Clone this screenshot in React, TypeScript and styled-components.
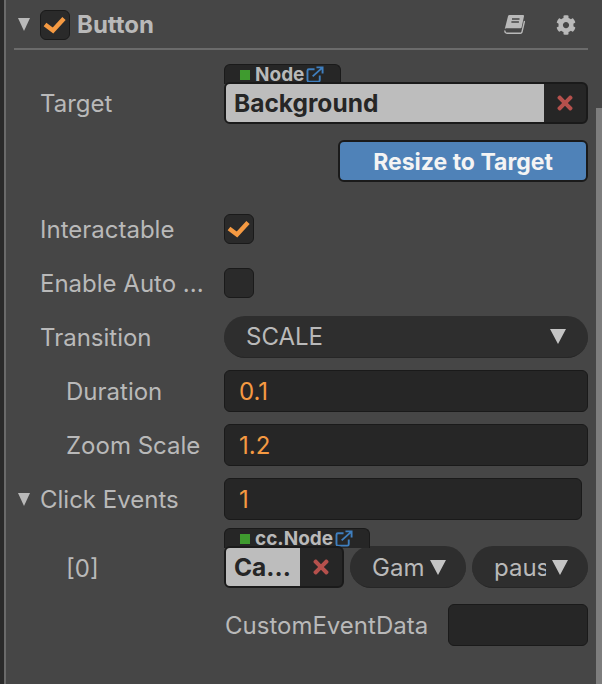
import * as React from 'react';
import styled, { createGlobalStyle } from 'styled-components';
import { FaCog, FaTimes } from 'react-icons/fa';

const GlobalStyle = createGlobalStyle`
  html, body {
    margin: 0;
    padding: 0;
    background: #464646;
  }
  body {
    font-family: Inter, "Liberation Sans", sans-serif;
    color: #b9b9b9;
    -webkit-font-smoothing: antialiased;
  }
`;

const Panel = styled.div`
  position: relative;
  box-sizing: border-box;
  width: 602px;
  height: 684px;
  overflow: hidden;
  background: #464646;
  border-left: 4px solid #2a2a2a;
  padding: 0 14px 0 10px;
`;

const Edge = styled.div`
  position: absolute;
  left: 0;
  top: 0;
  bottom: 0;
  width: 2px;
  background: #6a6a6a;
`;

const Scrollbar = styled.div`
  position: absolute;
  right: 0;
  top: 108px;
  bottom: 0;
  width: 6px;
  background: #7d7d7d;
`;

const Header = styled.div`
  box-sizing: border-box;
  display: flex;
  align-items: center;
  height: 50px;
  padding-top: 1px;
  border-bottom: 2px solid #6b6b6b;
`;

const Arrow = styled.span`
  display: block;
  width: 0;
  height: 0;
  margin: 0 10px 0 4px;
  border-left: 6px solid transparent;
  border-right: 6px solid transparent;
  border-top: 13px solid #b9b9b9;
  flex: none;
`;

const Check = styled.div`
  box-sizing: border-box;
  display: flex;
  align-items: center;
  justify-content: center;
  width: 30px;
  height: 30px;
  background: #2a2a2a;
  border: 1px solid #1a1a1a;
  border-radius: 6px;
  flex: none;
`;

const CheckMark = styled.svg`
  display: block;
  width: 28px;
  height: 28px;
`;

const HeaderTitle = styled.span`
  margin-left: 7px;
  font-size: 24px;
  font-weight: 700;
  color: #b9b9b9;
  flex: 1;
`;

const HeaderIcons = styled.div`
  display: flex;
  align-items: center;
  gap: 31px;
  padding-right: 12px;
  font-size: 20px;
  color: #b9b9b9;
`;

const BookIcon = styled.svg`
  display: block;
  width: 21px;
  height: 21px;
`;

const Row = styled.div`
  display: flex;
  align-items: center;
  height: 54px;
`;

const Label = styled.div<{ $indent?: number }>`
  box-sizing: border-box;
  flex: none;
  width: 210px;
  padding-left: ${p => p.$indent ?? 26}px;
  font-size: 24px;
  white-space: nowrap;
`;

const FoldLabel = styled.div`
  display: flex;
  align-items: center;
  flex: none;
  width: 210px;
  font-size: 24px;
`;

const Value = styled.div`
  flex: 1;
  min-width: 0;
  display: flex;
  gap: 6px;
`;

const Input = styled.div<{ $width?: number }>`
  box-sizing: border-box;
  width: ${p => (p.$width ? `${p.$width}px` : '100%')};
  height: 42px;
  padding: 0 14px;
  line-height: 42px;
  background: #262626;
  border: 1px solid #1a1a1a;
  border-radius: 6px;
  color: #f59a42;
  font-size: 24px;
`;

const Select = styled.div<{ $wide?: boolean }>`
  box-sizing: border-box;
  display: flex;
  align-items: center;
  width: ${p => (p.$wide ? '100%' : '116px')};
  height: 42px;
  padding: ${p => (p.$wide ? '0 22px 0 22px' : '2px 20px 0 22px')};
  background: #2e2e2e;
  border-bottom: 1px solid #262626;
  border-radius: 21px;
  font-size: 24px;
  color: #b9b9b9;
  flex: none;
`;

const SelectText = styled.span`
  flex: 1;
  min-width: 0;
  overflow: hidden;
  white-space: nowrap;
`;

const SelectCaret = styled.span`
  flex: none;
  width: 0;
  height: 0;
  margin-left: 6px;
  border-left: 8px solid transparent;
  border-right: 8px solid transparent;
  border-top: 15px solid #c4c4c4;
`;

const PickerWrap = styled.div<{ $width: number }>`
  position: relative;
  flex: none;
  width: ${p => p.$width}px;
  height: 42px;
`;

const PickerTab = styled.div<{ $width: number }>`
  position: absolute;
  left: 0;
  bottom: 40px;
  box-sizing: border-box;
  display: flex;
  align-items: center;
  width: ${p => p.$width}px;
  height: 20px;
  padding: 0 0 0 15px;
  background: #262626;
  border: 1px solid #1a1a1a;
  border-bottom: 0;
  border-radius: 6px 6px 0 0;
  font-size: 19px;
  font-weight: 700;
  color: #b9b9b9;
`;

const GreenDot = styled.span`
  flex: none;
  width: 10px;
  height: 10px;
  margin-right: 5px;
  background: #3f9b2f;
`;

const LinkIcon = styled.svg`
  flex: none;
  width: 19px;
  height: 17px;
  margin-left: 2px;
`;

const PickerField = styled.div`
  position: relative;
  box-sizing: border-box;
  display: flex;
  width: 100%;
  height: 100%;
  overflow: hidden;
  background: #262626;
  border: 2px solid #1a1a1a;
  border-radius: 6px;
`;

const PickerName = styled.div`
  flex: 1;
  min-width: 0;
  padding-left: 8px;
  line-height: 39px;
  background: #bdbdbd;
  color: #262626;
  font-size: 24.5px;
  font-weight: 700;
  white-space: nowrap;
  overflow: hidden;
`;

const PickerClear = styled.div`
  flex: none;
  display: flex;
  align-items: center;
  justify-content: center;
  width: 42px;
  color: #b5504c;
  font-size: 22px;
`;

const ActionRow = styled.div`
  display: flex;
  justify-content: flex-end;
  margin-top: 16px;
  margin-bottom: 20px;
`;

const ActionButton = styled.div`
  box-sizing: border-box;
  width: 250px;
  height: 42px;
  line-height: 40px;
  text-align: center;
  background: #4f82b8;
  border: 2px solid #1a1a1a;
  border-radius: 6px;
  color: #f4f4f4;
  font-size: 23px;
  font-weight: 700;
`;

const TargetRow = styled(Row)`
  align-items: flex-end;
  height: 74px;
`;

const TargetLabel = styled(Label)`
  line-height: 40px;
`;

const ShortInput = styled(Value)`
  padding-right: 6px;
`;

const EventRow = styled(Row)`
  height: 72px;
  padding-top: 10px;
  box-sizing: border-box;
`;

const EventLabel = styled(Label)`
  padding-top: 2px;
`;

const DataRow = styled.div`
  display: flex;
  align-items: center;
  justify-content: space-between;
  height: 54px;
  padding-left: 211px;
  font-size: 24px;
  white-space: nowrap;
`;

const Tick = () => (
  <CheckMark viewBox="0 0 28 28" fill="none" stroke="#f59a42" strokeWidth="4.500">
    <path d="M4 13.500 12 19.500 23 7.500" />
  </CheckMark>
);

const Book = () => (
  <BookIcon viewBox="0 0 21 21">
    <path
      d="M5.500 1H19a1 1 0 0 1 1 1.200L17.600 13.500a1 1 0 0 1-1 .8H3c-1 0-2 .4-2.300 1L4 2.200A1.600 1.600 0 0 1 5.500 1Z"
      fill="#b9b9b9"
    />
    <path
      d="M1 16.500c-.3 1.500.5 2.800 2 2.800h13.500c.7 0 1.200-.4 1.400-1L20.500 7"
      fill="none"
      stroke="#b9b9b9"
      strokeWidth="1.400"
    />
    <path d="M8 5h7.500M7.400 8h7.500" stroke="#464646" strokeWidth="1.400" />
  </BookIcon>
);

const External = () => (
  <LinkIcon viewBox="0 0 20 18" fill="none" stroke="#3f7fbf" strokeWidth="2">
    <path d="M9 3.500H3a1.500 1.500 0 0 0-1.500 1.500v10A1.500 1.500 0 0 0 3 16.500h10a1.500 1.500 0 0 0 1.500-1.500v-5" />
    <path d="M7 11 17 2M11 1.500h6.500V8" />
  </LinkIcon>
);

const Picker = ({ width, tab, tabWidth, name }: { width: number; tab: string; tabWidth: number; name: string }) => (
  <PickerWrap $width={width}>
    <PickerTab $width={tabWidth}>
      <GreenDot />
      {tab}
      <External />
    </PickerTab>
    <PickerField>
      <PickerName>{name}</PickerName>
      <PickerClear><FaTimes /></PickerClear>
    </PickerField>
  </PickerWrap>
);

export default function App() {
  return (
    <>
      <GlobalStyle />
      <Panel>
        <Edge />
        <Scrollbar />
        <Header>
          <Arrow />
          <Check><Tick /></Check>
          <HeaderTitle>Button</HeaderTitle>
          <HeaderIcons>
            <Book />
            <FaCog />
          </HeaderIcons>
        </Header>

        <TargetRow>
          <TargetLabel>Target</TargetLabel>
          <Picker width={364} tab="Node" tabWidth={117} name="Background" />
        </TargetRow>
        <ActionRow>
          <ActionButton>Resize to Target</ActionButton>
        </ActionRow>

        <Row>
          <Label>Interactable</Label>
          <Check><Tick /></Check>
        </Row>
        <Row>
          <Label>Enable Auto ...</Label>
          <Check />
        </Row>
        <Row>
          <Label>Transition</Label>
          <Value>
            <Select $wide>
              <SelectText>SCALE</SelectText>
              <SelectCaret />
            </Select>
          </Value>
        </Row>
        <Row>
          <Label $indent={52}>Duration</Label>
          <Value><Input>0.1</Input></Value>
        </Row>
        <Row>
          <Label $indent={52}>Zoom Scale</Label>
          <Value><Input>1.2</Input></Value>
        </Row>
        <Row>
          <FoldLabel>
            <Arrow />
            Click Events
          </FoldLabel>
          <ShortInput><Input>1</Input></ShortInput>
        </Row>
        <EventRow>
          <EventLabel $indent={52}>[0]</EventLabel>
          <Value>
            <Picker width={120} tab="cc.Node" tabWidth={146} name="Ca..." />
            <Select>
              <SelectText>Gam</SelectText>
              <SelectCaret />
            </Select>
            <Select>
              <SelectText>pause</SelectText>
              <SelectCaret />
            </Select>
          </Value>
        </EventRow>
        <DataRow>
          CustomEventData
          <Input $width={140} />
        </DataRow>
      </Panel>
    </>
  );
}
